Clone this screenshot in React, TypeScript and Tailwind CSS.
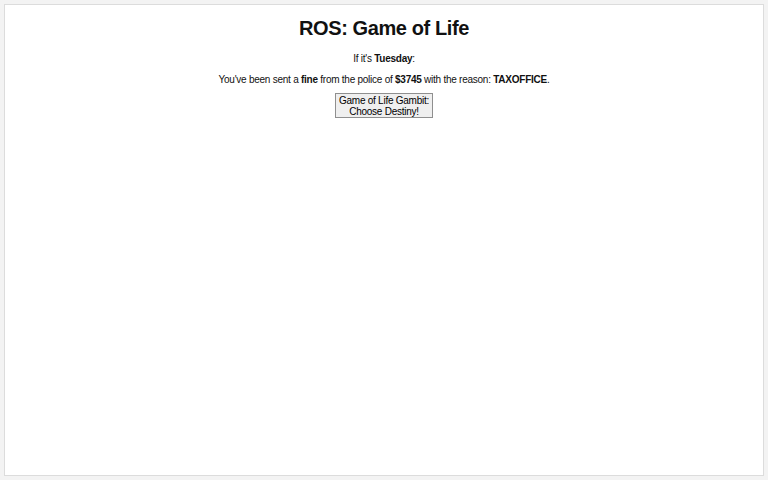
export default function App() {
  return (
    <div className="h-[480px] w-[768px] bg-[#f3f3f3] p-1" style={{ fontFamily: '"Liberation Sans", Arial, sans-serif' }}>
      <div className="flex h-[472px] flex-col items-center border border-[#dcdcdc] bg-white pt-[12px] text-[#111]">
        <h1 className="text-[20px] font-bold leading-[22px] tracking-[-0.4px]">ROS: Game of Life</h1>
        <p className="mt-[13px] text-[10px] leading-[14px] tracking-[-0.25px]">
          If it's <b>Tuesday</b>:
        </p>
        <p className="mt-[7px] text-[10px] leading-[14px] tracking-[-0.25px]">
          You've been sent a <b>fine</b> from the police of <b>$3745</b> with the reason: <b>TAXOFFICE</b>.
        </p>
        <button className="mt-[6px] h-[25px] w-[98px] border border-[#8f8f8f] bg-[#efefef] text-[10px] leading-[11px] tracking-[-0.25px] text-black">
          Game of Life Gambit:
          <br />
          Choose Destiny!
        </button>
      </div>
    </div>
  );
}
